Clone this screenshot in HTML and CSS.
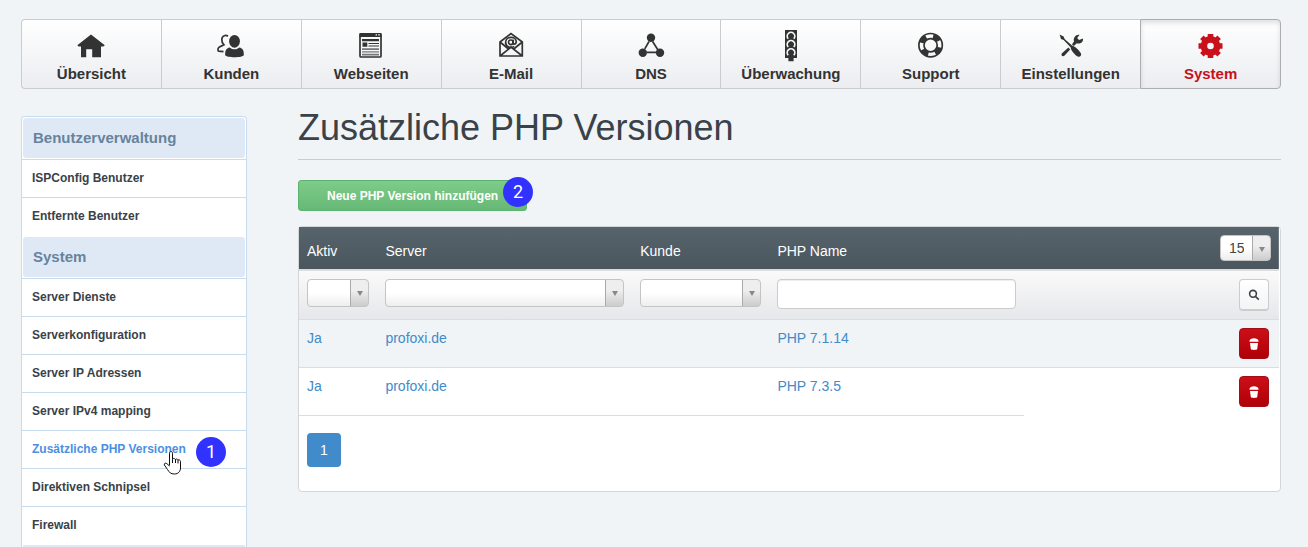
FILE: index.html
```html
<!DOCTYPE html>
<html lang="de">

<head>
    <meta charset="UTF-8">
    <meta name="viewport" content="width=device-width, initial-scale=1.0">
    <title>Zusätzliche PHP Versionen</title>

    <link rel="stylesheet" href="styles.css">
</head>

<body>
    <nav class="main-nav">
        <a href="#">
            <svg viewBox="0 0 32 32">
                <path d="M16 4.5 29.8 15.2 28.4 16.6H26V27.3H17.2V19.3H11.2V27.3H6V16.6H3.6L2.3 15.2Z" />
            </svg>
            <span>Übersicht</span>
        </a>
        <a href="#">
            <svg viewBox="0 0 32 32">
                <path class="line" d="M13 6.2C11 4.8 7 5.4 6.8 9.5C6.7 12 7.8 13.8 9 14.8C7 16 3.8 16.4 3.2 18.2C2.8 20 3 21 3.6 21.2L8.5 21.6" />
                <ellipse cx="19.5" cy="11.3" rx="5.4" ry="6.4" />
                <path d="M14.8 17.4C17.5 20 21.5 20 24.2 17.4C28 18.2 29 20.4 28.8 25C28.6 28 10.4 28 10.2 25C10 20.4 11 18.2 14.8 17.4Z" />
            </svg>
            <span>Kunden</span>
        </a>
        <a href="#">
            <svg viewBox="0 0 32 32">
                <rect class="line" x="5" y="4" width="21" height="23" rx="1" />
                <path d="M4.5 3H26.5V7H4.5ZM7 9H24V11.2H7ZM7.5 12.6H12.3V16.8H7.5ZM13.5 13H24V14H13.5ZM13.5 15.6H24V16.6H13.5Z" />
                <path class="grey" d="M7 18.2H24V20H7ZM7 21.2H24V22.6H7ZM7 23.8H24V25.6H7Z" />
                <path class="white" d="M20.6 4.2H22V5.6H20.6ZM23.2 4.2H24.8V5.6H23.2Z" />
            </svg>
            <span>Webseiten</span>
        </a>
        <a href="#">
            <svg viewBox="0 0 32 32">
                <path class="line" d="M5 12 16 3.5 27.3 12V26H5ZM5 12 13.5 19M27.3 12 18.7 19M5 26 16 17.2 27.3 26" />
                <circle class="line" cx="15.8" cy="12.3" r="2.3" />
                <path class="line" d="M18.4 9.6 17.9 13.2C18 15 21.3 14.4 21.3 11.6C21 5.8 10.6 5.8 10.6 12.4C10.8 17.6 16 18.4 19.2 16.4" />
            </svg>
            <span>E-Mail</span>
        </a>
        <a href="#">
            <svg viewBox="0 0 32 32">
                <circle cx="16" cy="7.8" r="4.2" />
                <circle cx="7.8" cy="22.8" r="4.2" />
                <circle cx="25" cy="22.8" r="4.2" />
                <path class="line" d="M14 11.5 9.8 18.8M17.6 11.5 23 20M12 22.4H22" />
            </svg>
            <span>DNS</span>
        </a>
        <a href="#">
            <svg viewBox="0 0 32 32">
                <path d="M10 0H22V28H18.6V31.2H13.4V28H10Z" />
                <path class="line light" d="M13.2 8.8A3.8 3.8 0 1 1 18.8 8.8M13.2 17A3.8 3.8 0 1 1 18.8 17M13.2 25.2A3.8 3.8 0 1 1 18.8 25.2" />
            </svg>
            <span>Überwachung</span>
        </a>
        <a href="#">
            <svg viewBox="0 0 32 32">
                <circle class="line" cx="15.6" cy="15.2" r="11.7" />
                <circle class="line" cx="15.6" cy="15.2" r="6.6" />
                <circle class="ring" cx="15.6" cy="15.2" r="9.2" transform="rotate(14 15.6 15.2)" />
            </svg>
            <span>Support</span>
        </a>
        <a href="#">
            <svg viewBox="0 0 32 32">
                <path d="M4.6 4.4 8.6 6.4 9.6 9 17 15.6C19 15.6 25 21 26 23.6C26.6 26 25 27.4 22.8 26.6C20 25 15.8 20.6 15.6 17.2L8.6 10 6 9Z" />
                <path d="M24.6 4.8 22.2 8 24 10 28 8.4C28.4 12.2 25.4 14 21.8 13.2L18.8 16 17 14.2 19 11.6C18 8 20.4 4.4 24.6 4.8ZM13.4 17.4 15.2 19.4 9.6 25.6C7.6 27.4 5.4 25 7 23.2Z" />
            </svg>
            <span>Einstellungen</span>
        </a>
        <a href="#" class="active">
            <svg viewBox="0 0 32 32">
                <circle class="gear" cx="15.5" cy="16" r="6.6" />
                <path d="M12.7 4H18.3V9H12.7ZM12.7 23H18.3V28H12.7ZM3.5 13.2H8.5V18.8H3.5ZM22.5 13.2H27.5V18.8H22.5ZM8.6 5.6 12.6 9.6 9.1 13.1 5.1 9.1ZM22.4 5.6 25.9 9.1 21.9 13.1 18.4 9.6ZM5.1 22.9 9.1 18.9 12.6 22.4 8.6 26.4ZM25.9 22.9 22.4 26.4 18.4 22.4 21.9 18.9Z" />
            </svg>
            <span>System</span>
        </a>
    </nav>

    <div class="container">
        <aside class="sidebar">
            <h2>Benutzerverwaltung</h2>
            <ul>
                <li><a href="#">ISPConfig Benutzer</a></li>
                <li><a href="#">Entfernte Benutzer</a></li>
            </ul>
            <h2>System</h2>
            <ul>
                <li><a href="#">Server Dienste</a></li>
                <li><a href="#">Serverkonfiguration</a></li>
                <li><a href="#">Server IP Adressen</a></li>
                <li><a href="#">Server IPv4 mapping</a></li>
                <li class="current">
                    <a href="#">Zusätzliche PHP Versionen</a>
                    <svg class="cursor" viewBox="0 0 20 26">
                        <path d="M6.5 15.5V3.2C6.5 1 9.5 1 9.5 3.2V9.5C9.5 8 12.5 8 12.5 10C12.5 8.4 15 8.6 15 10.5C15 9.4 17.5 9.6 17.5 11.5V18C17.5 21 15.5 24 11.5 24C7.5 24 6.5 22.5 4.5 19.5L1.4 15C.6 13.4 2.6 12.6 3.8 13.6L6.5 16M9.5 9.5V13M12.5 10V13M15 10.5V13.5" />
                    </svg>
                    <span class="badge">1</span>
                </li>
                <li><a href="#">Direktiven Schnipsel</a></li>
                <li><a href="#">Firewall</a></li>
            </ul>
            <div class="next-section"></div>
        </aside>

        <main>
            <h1>Zusätzliche PHP Versionen</h1>

            <div class="toolbar">
                <button type="button" class="btn-add">Neue PHP Version hinzufügen</button>
                <span class="badge">2</span>
            </div>

            <div class="panel">
                <table>
                    <thead>
                        <tr>
                            <th class="col-active">Aktiv</th>
                            <th class="col-server">Server</th>
                            <th class="col-client">Kunde</th>
                            <th class="col-name">PHP Name</th>
                            <th class="col-action">
                                <select class="limit" aria-label="Einträge pro Seite">
                                    <option>15</option>
                                </select>
                            </th>
                        </tr>
                    </thead>
                    <tbody>
                        <tr class="filter">
                            <td><select aria-label="Aktiv"><option></option></select></td>
                            <td><select aria-label="Server"><option></option></select></td>
                            <td><select aria-label="Kunde"><option></option></select></td>
                            <td><input type="text" aria-label="PHP Name"></td>
                            <td class="action">
                                <button type="button" class="btn-icon" aria-label="Suchen">
                                    <svg viewBox="0 0 12 12">
                                        <circle cx="5" cy="4.8" r="3.4" />
                                        <path d="M7.4 7.4 10.8 10.6" />
                                    </svg>
                                </button>
                            </td>
                        </tr>
                        <tr class="odd">
                            <td><a href="#">Ja</a></td>
                            <td><a href="#">profoxi.de</a></td>
                            <td></td>
                            <td><a href="#">PHP 7.1.14</a></td>
                            <td class="action">
                                <button type="button" class="btn-icon btn-delete" aria-label="Löschen">
                                    <svg viewBox="0 0 12 12">
                                        <path d="M1.5 3C1.6 1 3.6 .2 6 .2S10.4 1 10.5 3V3.8H1.5ZM2 5H10L9.2 11C9 12.2 3 12.2 2.8 11Z" />
                                    </svg>
                                </button>
                            </td>
                        </tr>
                        <tr>
                            <td><a href="#">Ja</a></td>
                            <td><a href="#">profoxi.de</a></td>
                            <td></td>
                            <td><a href="#">PHP 7.3.5</a></td>
                            <td class="action">
                                <button type="button" class="btn-icon btn-delete" aria-label="Löschen">
                                    <svg viewBox="0 0 12 12">
                                        <path d="M1.5 3C1.6 1 3.6 .2 6 .2S10.4 1 10.5 3V3.8H1.5ZM2 5H10L9.2 11C9 12.2 3 12.2 2.8 11Z" />
                                    </svg>
                                </button>
                            </td>
                        </tr>
                    </tbody>
                    <tfoot>
                        <tr>
                            <td colspan="4"><a href="#" class="page">1</a></td>
                        </tr>
                    </tfoot>
                </table>
            </div>
        </main>
    </div>
</body>

</html>
```
FILE: styles.css
```css
* {
    box-sizing: border-box;
}

body {
    margin: 0;
    padding: 19px 27px 0 21px;
    background: #f0f4f7;
    color: #3a4248;
    font-family: "Liberation Sans", Arial, sans-serif;
    font-size: 14px;
    line-height: 20px;
}

a {
    color: #428bca;
    text-decoration: none;
}

/* top navigation */
.main-nav {
    display: flex;
}

.main-nav a {
    flex: 1;
    display: flex;
    flex-direction: column;
    align-items: center;
    gap: 2px;
    padding: 10px 0 4px;
    border: 1px solid #ccc;
    border-right: none;
    background: linear-gradient(#fff, #ebedf0);
    color: #333;
    font-size: 15px;
    font-weight: bold;
}

.main-nav a:first-child {
    border-radius: 4px 0 0 4px;
}

.main-nav a.active {
    border: 1px solid #adadad;
    border-radius: 0 4px 4px 0;
    box-shadow: inset 0 3px 5px rgba(0, 0, 0, 0.125);
    color: #c9101b;
}

.main-nav svg {
    width: 32px;
    height: 32px;
    fill: currentColor;
}

.main-nav .line {
    fill: none;
    stroke: currentColor;
    stroke-width: 1.7;
}

.main-nav .light {
    stroke: #f6f7f8;
}

.main-nav .grey {
    fill: #777;
}

.main-nav .white {
    fill: #fff;
}

.main-nav .ring {
    fill: none;
    stroke: currentColor;
    stroke-width: 5;
    stroke-dasharray: 7.4 7.05;
}

.main-nav .gear {
    fill: none;
    stroke: currentColor;
    stroke-width: 6.6;
}

.container {
    display: grid;
    grid-template-columns: 226px 1fr;
    gap: 51px;
    align-items: start;
}

/* sidebar */
.sidebar {
    margin-top: 27px;
    border: 1px solid #c9dcee;
    border-bottom: none;
    border-radius: 4px 4px 0 0;
    background: #fff;
}

.sidebar h2 {
    margin: 0;
    padding: 10px;
    border: 1px solid #fff;
    border-radius: 4px;
    background: #dfe9f5;
    color: #67839c;
    font-size: 15px;
    line-height: 20px;
}

.sidebar ul {
    margin: 0;
    padding: 0;
    border-top: 1px solid #c9dcee;
    list-style: none;
}

.sidebar li {
    position: relative;
    height: 38px;
    padding: 0 10px;
    border-bottom: 1px solid #c9dcee;
    font-size: 12px;
    font-weight: bold;
    line-height: 37px;
}

.sidebar li:last-child {
    border-bottom: none;
}

.sidebar li a {
    color: #3a4248;
}

.sidebar .current a {
    color: #4a90e2;
}

.next-section {
    height: 2px;
    margin: 0 1px;
    background: #dfe9f5;
}

.cursor {
    position: absolute;
    top: 19px;
    left: 141px;
    width: 20px;
    height: 26px;
    z-index: 1;
    fill: #fff;
    stroke: #111;
}

.badge {
    position: absolute;
    width: 30px;
    height: 30px;
    border-radius: 50%;
    background: #3232ff;
    color: #fff;
    font-family: Roboto, sans-serif;
    font-size: 18px;
    font-weight: normal;
    line-height: 30px;
    text-align: center;
}

.sidebar .badge {
    top: 6px;
    left: 174px;
}

/* content */
h1 {
    margin: 19px 0 20px;
    padding-bottom: 11px;
    border-bottom: 1px solid #c8ccd2;
    font-size: 36px;
    font-weight: normal;
    line-height: 40px;
}

.toolbar {
    position: relative;
    width: fit-content;
}

.btn-add {
    display: block;
    height: 31px;
    padding: 0 28px;
    border: 1px solid #5cb270;
    border-radius: 3px;
    background: linear-gradient(#7dcc88, #67b877);
    color: #fff;
    font-family: inherit;
    font-size: 12px;
    font-weight: bold;
}

.toolbar .badge {
    top: -3px;
    right: -6px;
}

.panel {
    margin-top: 15px;
    padding: 0 1px 16px 0;
    border: 1px solid #d3d7da;
    border-radius: 4px;
    background: #fff;
}

table {
    width: 100%;
    border-collapse: separate;
    border-spacing: 0;
    table-layout: fixed;
}

thead {
    background: linear-gradient(#57646c, #4a555d);
}

th {
    padding: 8px;
    border-bottom: 2px solid #ddd;
    color: #fff;
    font-weight: normal;
    text-align: left;
    vertical-align: bottom;
}

td {
    padding: 8px;
    border-top: 1px solid #ddd;
    vertical-align: top;
}

.col-active {
    width: 8%;
}

.col-server,
.col-name,
.col-action {
    width: 26%;
}

.col-client {
    width: 14%;
}

.filter {
    background: linear-gradient(#fafafa, #e6e7ea);
}

.filter td {
    border-top: none;
}

.odd {
    background: #f0f4f7;
}

select {
    display: block;
    width: 100%;
    height: 28px;
    padding: 0 26px 0 8px;
    border: 1px solid #c4c4c4;
    border-radius: 4px;
    appearance: none;
    background:
        linear-gradient(#aaa, #aaa) right 17px top / 1px 100% no-repeat,
        linear-gradient(#eee 40%, #ccc) right / 17px 100% no-repeat,
        linear-gradient(#fff 50%, #eee);
    color: #444;
    font-family: inherit;
    font-size: 14px;
}

/* arrow of the drop-downs */
td:has(> select),
th:has(> select) {
    position: relative;
}

td:has(> select)::after,
th:has(> select)::after {
    content: "";
    position: absolute;
    top: 20px;
    right: 14px;
    border: 3px solid transparent;
    border-top: 5px solid #888;
    border-bottom: none;
    pointer-events: none;
}

.limit {
    width: 51px;
    height: 26px;
    margin-left: auto;
}

input[type="text"] {
    display: block;
    width: 100%;
    height: 30px;
    padding: 0 8px;
    border: 1px solid #ccc;
    border-radius: 4px;
    background: #fff;
    box-shadow: inset 0 1px 1px rgba(0, 0, 0, 0.075);
    font-family: inherit;
    font-size: 14px;
}

.action {
    padding-right: 10px;
}

.btn-icon {
    display: flex;
    align-items: center;
    justify-content: center;
    width: 30px;
    height: 32px;
    margin-left: auto;
    padding: 0;
    border: 1px solid #ccc;
    border-bottom-width: 2px;
    border-radius: 4px;
    background: linear-gradient(#fff, #f3f4f5);
}

.btn-icon svg {
    width: 12px;
    height: 12px;
    fill: none;
    stroke: #3a4248;
    stroke-width: 1.6;
}

.btn-delete {
    height: 31px;
    border: 1px solid #a50d14;
    background: linear-gradient(#cb0f19, #b10007);
}

.btn-delete svg {
    fill: #fff;
    stroke: none;
}

.page {
    display: block;
    width: 34px;
    height: 34px;
    margin-top: 9px;
    border-radius: 4px;
    background: #428bca;
    color: #fff;
    line-height: 34px;
    text-align: center;
}
```
